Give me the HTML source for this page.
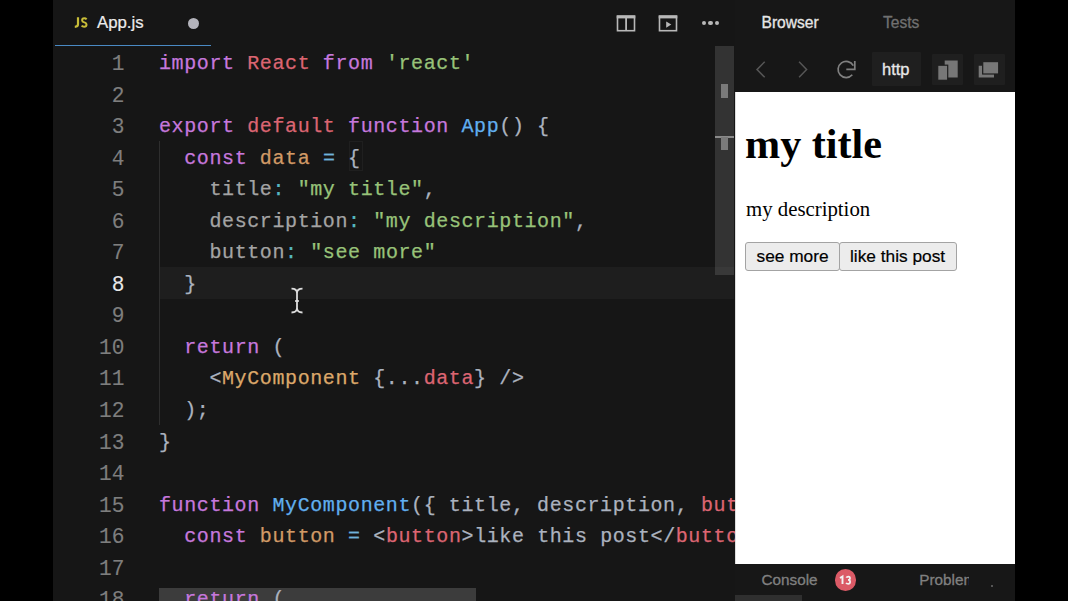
<!DOCTYPE html>
<html><head><meta charset="utf-8">
<style>
*{margin:0;padding:0;box-sizing:border-box}
html,body{width:1068px;height:601px;overflow:hidden;background:#000}
body{position:relative;font-family:"Liberation Sans",sans-serif}
.abs{position:absolute}
#editor{position:absolute;left:53px;top:0;width:682px;height:601px;background:#161616;overflow:hidden}
#tabline{position:absolute;left:2px;top:44.5px;width:156px;height:1.5px;background:#4a8ac4}
.code{position:absolute;left:106px;top:48px;-webkit-text-stroke:0.25px currentColor;font-family:"Liberation Mono",monospace;font-size:20px;letter-spacing:0.6px;line-height:31.55px;white-space:pre;color:#abb2bf}
.ln{position:absolute;left:0;top:49px;width:71.5px;-webkit-text-stroke:0.1px currentColor;text-align:right;font-family:"Liberation Mono",monospace;font-size:21.2px;letter-spacing:0;line-height:31.55px;color:#7e7e7e;white-space:pre}
.k{color:#c678dd}.r{color:#dc6572}.s{color:#98c379}.f{color:#61afef}.v{color:#d19a66}.c{color:#56b6c2}.eq{color:#6fb3dc}.t{color:#dca86a}.p{color:#abb2bf}.g{color:#a4a4a4}
#panel{position:absolute;left:735px;top:0;width:280px;height:601px;background:#171717;overflow:hidden}
#view{position:absolute;left:0;top:92px;width:280px;height:472px;background:#fff;border-left:1px solid #ddd}
</style></head><body>
<div id="editor">
  <!-- tab -->
  <svg class="abs" style="left:20px;top:16px" width="16" height="13" viewBox="0 0 16 13">
    <path d="M5 1.2 V8.2 Q5 10.6 1.8 10.8" fill="none" stroke="#c8bd38" stroke-width="2.2"/>
    <path d="M13.6 3.3 Q12.8 2.3 11.2 2.3 Q9.1 2.3 9.1 4.2 Q9.1 5.8 11.3 6.4 Q13.5 7 13.5 8.7 Q13.5 10.7 11.1 10.7 Q9.5 10.7 8.6 9.7" fill="none" stroke="#c8bd38" stroke-width="2"/>
  </svg>
  <div class="abs" style="left:44px;top:13px;font-size:16.8px;line-height:19px;color:#ececec;-webkit-text-stroke:0.2px currentColor">App.js</div>
  <div class="abs" style="left:135px;top:18px;width:11px;height:11px;border-radius:50%;background:#b4b4bc"></div>
  <div id="tabline"></div>
  <!-- toolbar icons -->
  <svg class="abs" style="left:560px;top:13px" width="24" height="22" viewBox="0 0 24 22">
    <rect x="4.5" y="3.2" width="17" height="14.5" fill="none" stroke="#b8b8b8" stroke-width="1.6"/>
    <rect x="3.7" y="2.4" width="18.6" height="3" fill="#b8b8b8"/>
    <rect x="12.2" y="3" width="1.8" height="14.5" fill="#b8b8b8"/>
  </svg>
  <svg class="abs" style="left:602px;top:13px" width="24" height="22" viewBox="0 0 24 22">
    <rect x="4.5" y="3.2" width="17" height="14.5" fill="none" stroke="#b8b8b8" stroke-width="1.6"/>
    <rect x="3.7" y="2.4" width="18.6" height="3" fill="#b8b8b8"/>
    <path d="M11.2 8.4 L16.3 11.6 L11.2 14.8 Z" fill="#b8b8b8"/>
  </svg>
  <div class="abs" style="left:648.7px;top:20.5px;width:4.4px;height:4.4px;border-radius:50%;background:#b8b8b8"></div>
  <div class="abs" style="left:655.4px;top:20.5px;width:4.4px;height:4.4px;border-radius:50%;background:#b8b8b8"></div>
  <div class="abs" style="left:662.1px;top:20.5px;width:4.4px;height:4.4px;border-radius:50%;background:#b8b8b8"></div>

  <!-- active line highlight -->
  <div class="abs" style="left:106px;top:267px;width:575px;height:31.5px;background:#1e1e1e"></div>
  <!-- selection line 18 -->
  <div class="abs" style="left:106px;top:588px;width:317px;height:20px;background:#3c3c3c"></div>
  <!-- indent guide -->
  <div class="abs" style="left:106px;top:141px;width:1px;height:284px;background:#2e2e2e"></div>
  <!-- bracket match -->
  <div class="abs" style="left:296.3px;top:141px;width:13.4px;height:30.3px;border:1px solid #1f1f1f"></div>

  <div class="ln">1
2
3
4
5
6
7
<span style="color:#e8e8e8">8</span>
9
10
11
12
13
14
15
16
17
18</div>
<div class="code"><span class="k">import</span> <span class="r">React</span> <span class="k">from</span> <span class="s">'react'</span>

<span class="k">export</span> <span class="r">default</span> <span class="k">function</span> <span class="f">App</span>() {
  <span class="k">const</span> <span class="v">data</span> <span class="eq">=</span> {
    <span class="g">title</span><span class="c">:</span> <span class="s">"my title"</span>,
    <span class="g">description</span><span class="c">:</span> <span class="s">"my description"</span>,
    <span class="g">button</span><span class="c">:</span> <span class="s">"see more"</span>
  }

  <span class="k">return</span> (
    &lt;<span class="t">MyComponent</span> {...<span class="r">data</span>} /&gt;
  );
}

<span class="k">function</span> <span class="f">MyComponent</span>({ title, description, <span class="r">button</span> }) {
  <span class="k">const</span> <span class="v">button</span> <span class="eq">=</span> &lt;<span class="r">button</span>&gt;like this post&lt;/<span class="r">button</span>&gt;

  <span class="k">return</span> (</div>

  <!-- scrollbar -->
  <div class="abs" style="left:661.5px;top:45.5px;width:19.5px;height:229px;background:#333333"></div><div class="abs" style="left:661.5px;top:267px;width:19.5px;height:7.7px;background:#393939"></div>
  <div class="abs" style="left:668px;top:84px;width:7px;height:13.5px;background:#7a7a7a"></div>
  <div class="abs" style="left:662px;top:136px;width:19px;height:1.5px;background:#8a8a8a"></div>
  <div class="abs" style="left:668px;top:137px;width:7px;height:13px;background:#7a7a7a"></div>
  <!-- I-beam cursor -->
  <svg class="abs" style="left:233px;top:284px" width="20" height="32" viewBox="0 0 20 32">
    <path d="M5.5 4.6 Q11 4.6 11 9 Q11 4.6 16.5 4.6 M11 9 V24 M5.5 28.5 Q11 28.5 11 24 Q11 28.5 16.5 28.5 M9.2 17 H12.8" fill="none" stroke="#dcdcdc" stroke-width="1.8"/>
  </svg>
</div>

<div id="panel">
  <div class="abs" style="left:26.5px;top:14px;font-size:15.6px;line-height:18px;color:#e6e6e6;-webkit-text-stroke:0.3px currentColor">Browser</div>
  <div class="abs" style="left:148px;top:14px;font-size:15.6px;line-height:18px;color:#707070;-webkit-text-stroke:0.3px currentColor">Tests</div>
  <!-- nav -->
  <svg class="abs" style="left:18px;top:58px" width="100" height="24" viewBox="0 0 100 24">
    <path d="M11.7 3.8 L4 11.6 L11.7 19.3" fill="none" stroke="#565656" stroke-width="1.5"/>
    <path d="M46.1 3.8 L53.6 11.6 L46.1 19.3" fill="none" stroke="#565656" stroke-width="1.5"/>
  </svg>
  <svg class="abs" style="left:100px;top:58px" width="24" height="24" viewBox="0 0 24 24">
    <path d="M17.3 16.8 A8.1 8.1 0 1 1 18.3 7.6" fill="none" stroke="#808080" stroke-width="1.7"/>
    <path d="M11.3 11.4 H19.8 V3" fill="none" stroke="#808080" stroke-width="1.7"/>
  </svg>
  <div class="abs" style="left:137px;top:52.3px;width:48.8px;height:33.8px;background:#1f1f1f;border-radius:1px;overflow:hidden">
    <div class="abs" style="left:10px;top:7.6px;width:28px;overflow:hidden;font-size:16.5px;line-height:19px;color:#e8e8e8;-webkit-text-stroke:0.3px currentColor">http</div>
  </div>
  <div class="abs" style="left:197px;top:53.5px;width:31px;height:31px;background:#1f1f1f;border-radius:1px"></div>
  <svg class="abs" style="left:197px;top:53.5px" width="31" height="31" viewBox="0 0 31 31">
    <rect x="12.7" y="6.5" width="13" height="17" fill="#777"/>
    <rect x="5.7" y="11.2" width="10" height="15.1" fill="#777" stroke="#1f1f1f" stroke-width="1.2"/>
  </svg>
  <div class="abs" style="left:238.5px;top:53.5px;width:31px;height:31px;background:#1f1f1f;border-radius:1px"></div>
  <svg class="abs" style="left:238.5px;top:53.5px" width="31" height="31" viewBox="0 0 31 31">
    <path d="M4.7 11.7 V23.5 H20 V20 H8 V11.7 Z" fill="#777"/>
    <rect x="8.7" y="7.6" width="16" height="12.4" fill="#777" stroke="#1f1f1f" stroke-width="1.2"/>
  </svg>

  <div id="view">
    <div class="abs" style="left:9px;top:27px;font-family:'Liberation Serif',serif;font-weight:bold;font-size:42.2px;line-height:50px;color:#000;white-space:nowrap">my title</div>
    <div class="abs" style="left:10px;top:105px;font-family:'Liberation Serif',serif;font-size:20.8px;line-height:24px;color:#000;white-space:nowrap">my description</div>
    <div class="abs" style="left:9.3px;top:150px;width:94.5px;height:28.5px;background:#ececec;border:1.4px solid #a3a3a3;border-radius:3px"></div>
    <div class="abs" style="left:102.8px;top:150px;width:118.5px;height:28.5px;background:#ececec;border:1.4px solid #a3a3a3;border-radius:3px"></div>
    <div class="abs" style="left:20.5px;top:153.7px;font-size:17.3px;line-height:20px;color:#000;white-space:nowrap;-webkit-text-stroke:0.2px #000">see more</div>
    <div class="abs" style="left:114px;top:153.7px;font-size:17.3px;line-height:20px;color:#000;white-space:nowrap;-webkit-text-stroke:0.2px #000">like this post</div>
  </div>
  <!-- bottom bar -->
  <div class="abs" style="left:26.5px;top:571px;font-size:15.3px;line-height:18px;color:#808080;-webkit-text-stroke:0.3px currentColor">Console</div>
  <div class="abs" style="left:99.6px;top:569px;width:21.5px;height:21.5px;border-radius:50%;background:#db5a66"></div>
  <svg class="abs" style="left:99.6px;top:569px" width="22" height="22" viewBox="0 0 22 22">
    <path d="M5 9 L7.5 7.5 V14.9" fill="none" stroke="#f2f2f2" stroke-width="1.9"/>
    <path d="M11.3 8.7 Q11.9 7.6 13.3 7.6 Q15 7.6 15 9.2 Q15 10.9 13 10.9 Q15.1 10.9 15.1 12.8 Q15.1 14.9 13.3 14.9 Q11.7 14.9 11.1 13.9" fill="none" stroke="#f2f2f2" stroke-width="1.7"/>
  </svg>
  <div class="abs" style="left:184.3px;top:571px;font-size:15.3px;line-height:18px;color:#808080;-webkit-text-stroke:0.3px currentColor;width:49.5px;overflow:hidden;white-space:nowrap">Problems</div>
  <div class="abs" style="left:0;top:595px;width:67px;height:6px;background:#2f2f2f"></div>
  <div class="abs" style="left:256px;top:585px;width:2px;height:1.5px;background:#555"></div>
</div>
</body></html>
